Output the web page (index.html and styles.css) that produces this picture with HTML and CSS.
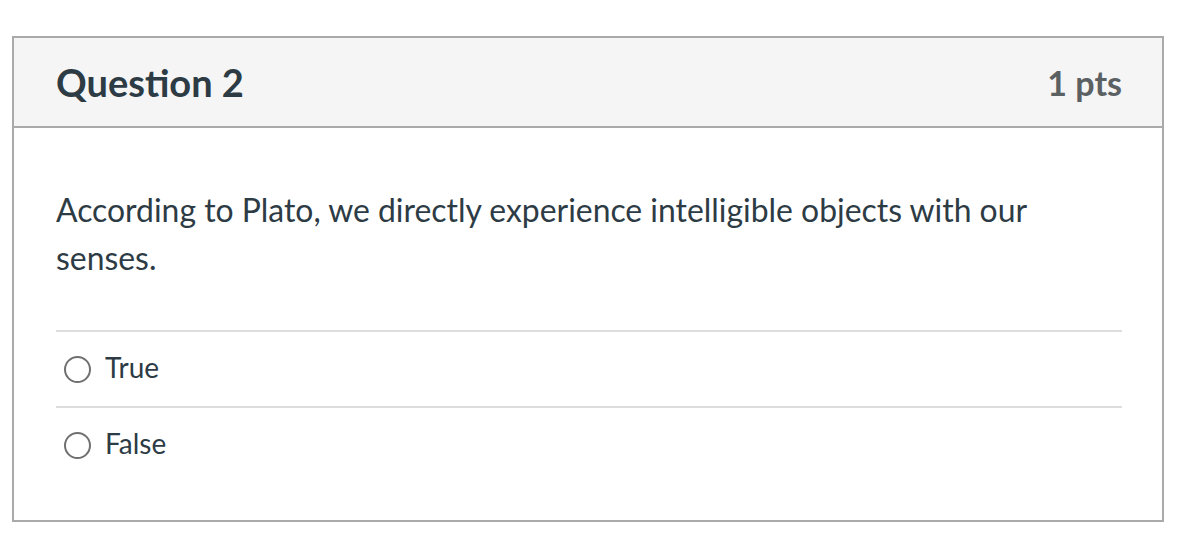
FILE: index.html
```html
<!DOCTYPE html>
<html>
<head>
<meta charset="utf-8">
<link rel="stylesheet" href="styles.css">
</head>
<body>
<div class="question">
  <div class="q-header">
    <h2 class="q-title">Question 2</h2>
    <div class="q-points">1 pts</div>
  </div>
  <div class="q-body">
    <p class="q-text">According to Plato, we directly experience intelligible objects with our senses.</p>
    <div class="answers">
      <label class="answer"><span class="radio"></span><span class="answer-label">True</span></label>
      <label class="answer"><span class="radio"></span><span class="answer-label">False</span></label>
    </div>
  </div>
</div>
</body>
</html>
```
FILE: styles.css
```css
html, body {
  margin: 0;
  padding: 0;
  background: #ffffff;
}
body {
  font-family: Lato, "Open Sans", sans-serif;
  color: #2d3b45;
  padding: 36px 20px 0 12px;
}
.question {
  width: 1148px;
  border: 2px solid #aaaaaa;
  box-sizing: content-box;
}
.q-header {
  display: flex;
  justify-content: space-between;
  align-items: center;
  height: 88px;
  background: #f5f5f5;
  border-bottom: 2px solid #aaaaaa;
  padding: 0 40px 0 42px;
}
.q-title {
  margin: 0;
  font-size: 38px;
  font-weight: 700;
  color: #2d3b45;
}
.q-points {
  font-size: 34px;
  font-weight: 700;
  color: #5b6063;
}
.q-body {
  padding: 58px 40px 38px 42px;
}
.q-text {
  margin: 0 0 48px 0;
  font-size: 31.9px;
  line-height: 48px;
  max-width: 1020px;
}
.answers {
  display: flex;
  flex-direction: column;
}
.answer {
  display: flex;
  align-items: center;
  height: 74px;
  border-top: 2px solid #dddddd;
  gap: 14px;
  padding-left: 8px;
}
.radio {
  width: 27px;
  height: 27px;
  border: 2px solid #707070;
  border-radius: 50%;
  box-sizing: border-box;
  background: #fff;
  margin-top: 1px;
}
.answer-label {
  font-size: 28px;
  line-height: 34px;
  padding-bottom: 5px;
}
```
